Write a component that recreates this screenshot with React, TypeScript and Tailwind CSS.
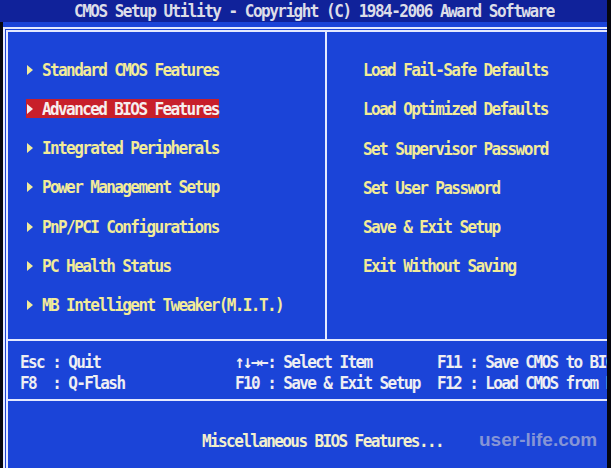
const leftItems = [
  "Standard CMOS Features",
  "Advanced BIOS Features",
  "Integrated Peripherals",
  "Power Management Setup",
  "PnP/PCI Configurations",
  "PC Health Status",
  "MB Intelligent Tweaker(M.I.T.)",
];

const rightItems = [
  "Load Fail-Safe Defaults",
  "Load Optimized Defaults",
  "Set Supervisor Password",
  "Set User Password",
  "Save & Exit Setup",
  "Exit Without Saving",
];

const Arrow = ({ active }: { active?: boolean }) => (
  <span
    className={
      "inline-block w-0 h-0 border-y-[5px] border-y-transparent border-l-[6px] " +
      (active ? "border-l-[#f6eeee]" : "border-l-[#f2eb98]")
    }
  />
);

const App = () => {
  return (
    <div
      className="w-[611px] h-[468px] overflow-hidden flex bg-[#1b44d8] text-[16px] font-bold tracking-[-1.6px] leading-[20px]"
      style={{ fontFamily: '"DejaVu Sans Mono", "Liberation Mono", monospace' }}
    >
      <div className="w-[3px] bg-[#05060f]" />
      <div className="flex-1 flex flex-col min-w-0">
        {/* title */}
        <div className="h-[22px] -ml-[3px] bg-[#10229a] text-[#dcdde8] whitespace-pre pl-[74px] pt-[1px] tracking-[-1.5px]">
          <span className="inline-block scale-y-[1.12]">
            CMOS Setup Utility - Copyright (C) 1984-2006 Award Software
          </span>
        </div>
        <div className="h-[5px]" />

        <div className="flex-1 flex flex-col border-t-[5px] border-l-[5px] border-double border-[#e4e9ff]">
          {/* menus */}
          <div className="h-[309px] flex border-b-2 border-[#e4e9ff]">
            <div className="w-[319px] border-r-2 border-[#e4e9ff] flex flex-col gap-[19.3px] pt-[28px] pl-[18px] text-[#f2eb98]">
              {leftItems.map((item, i) => (
                <div key={item} className="h-[20px] flex">
                  <span
                    className={
                      "flex items-center pl-[1px] h-[19px] " +
                      (i === 1 ? "bg-[#c81f2a] text-[#f6eeee]" : "")
                    }
                  >
                    <span className="w-[15px] flex">
                      <Arrow active={i === 1} />
                    </span>
                    <span className="inline-block whitespace-pre scale-y-[1.12]">{item}</span>
                  </span>
                </div>
              ))}
            </div>
            <div className="flex-1 flex flex-col gap-[19.3px] pt-[28px] pl-[36px] text-[#f2eb98]">
              {rightItems.map((item) => (
                <div key={item} className="h-[20px] whitespace-pre scale-y-[1.12] origin-left">
                  {item}
                </div>
              ))}
            </div>
          </div>

          {/* key help */}
          <div className="h-[60px] border-b-2 border-[#e4e9ff] pt-[10px] pl-[12px] text-[#eeeef2] leading-[21px] whitespace-pre">
            <div className="flex scale-y-[1.12]">
              <span className="w-[215px]">Esc : Quit</span>
              <span className="w-[202px]">↑↓→←: Select Item</span>
              <span className="flex-1 overflow-hidden">F11 : Save CMOS to BIOS</span>
            </div>
            <div className="flex scale-y-[1.12]">
              <span className="w-[215px]">F8  : Q-Flash</span>
              <span className="w-[202px]">F10 : Save &amp; Exit Setup</span>
              <span className="flex-1 overflow-hidden">F12 : Load CMOS from BIOS</span>
            </div>
          </div>

          {/* status */}
          <div className="flex-1 flex items-start pt-[30px] pl-[194px] whitespace-pre">
            <span className="inline-block scale-y-[1.12] text-[#f2efcc]">
              Miscellaneous BIOS Features...
            </span>
            <span
              className="ml-[36px] -mt-[1px] text-[19px] tracking-normal text-[#8595d6] font-bold"
              style={{ fontFamily: '"Liberation Sans", Arial, sans-serif' }}
            >
              user-life.com
            </span>
          </div>
        </div>
      </div>
      <div className="w-[4px] bg-[#05060f]" />
    </div>
  );
};

export default App;
